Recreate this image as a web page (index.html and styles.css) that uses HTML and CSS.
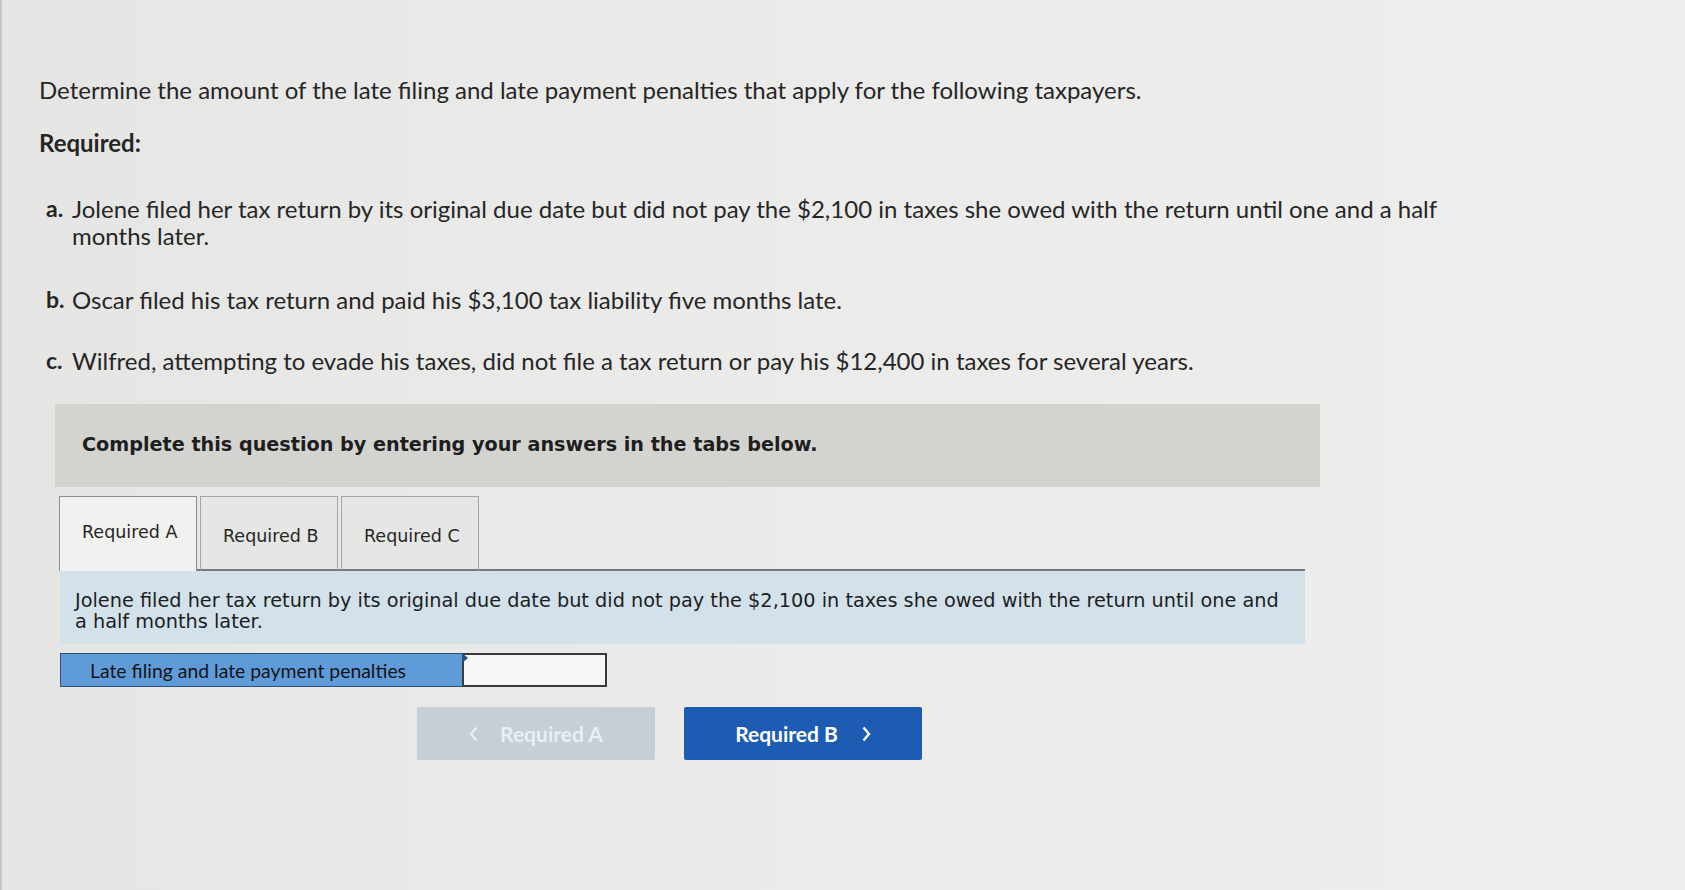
FILE: index.html
```html
<!DOCTYPE html>
<html lang="en">
<head>
<meta charset="utf-8">
<title>Late filing and late payment penalties</title>
<link rel="stylesheet" href="styles.css">
</head>
<body>
<div class="page">
  <p class="title">Determine the amount of the late filing and late payment penalties that apply for the following taxpayers.</p>
  <p class="required">Required:</p>
  <div class="items">
    <div class="item item-a"><span class="marker">a.</span><span class="text">Jolene filed her tax return by its original due date but did not pay the $2,100 in taxes she owed with the return until one and a half months later.</span></div>
    <div class="item item-b"><span class="marker">b.</span><span class="text">Oscar filed his tax return and paid his $3,100 tax liability five months late.</span></div>
    <div class="item item-c"><span class="marker">c.</span><span class="text">Wilfred, attempting to evade his taxes, did not file a tax return or pay his $12,400 in taxes for several years.</span></div>
  </div>

  <div class="instructions">Complete this question by entering your answers in the tabs below.</div>

  <div class="tabs">
    <div class="tab active">Required A</div>
    <div class="tab">Required B</div>
    <div class="tab">Required C</div>
  </div>
  <div class="panel"><p class="panel-text">Jolene filed her tax return by its original due date but did not pay the $2,100 in taxes she owed with the return until one and a half months later.</p></div>

  <div class="answer-row">
    <div class="answer-label">Late filing and late payment penalties</div>
    <div class="answer-input"><span class="notch"></span></div>
  </div>

  <div class="nav">
    <div class="btn btn-prev">
      <svg class="chev" width="9" height="16" viewBox="0 0 9 16"><path d="M7.5 1.5 L2 8 L7.5 14.5" fill="none" stroke="currentColor" stroke-width="2"/></svg>
      <span>Required A</span>
    </div>
    <div class="btn btn-next">
      <span>Required B</span>
      <svg class="chev" width="9" height="16" viewBox="0 0 9 16"><path d="M1.5 1.5 L7 8 L1.5 14.5" fill="none" stroke="currentColor" stroke-width="2.4"/></svg>
    </div>
  </div>
</div>
</body>
</html>
```

FILE: styles.css
```css
* { box-sizing: border-box; }

html, body {
  margin: 0;
  padding: 0;
}

body {
  width: 1685px;
  height: 890px;
  overflow: hidden;
  background: linear-gradient(90deg, #e5e6e4 0%, #eaeae8 35%, #eeeeec 100%);
  font-family: "Lato", "Liberation Sans", sans-serif;
  color: #262626;
  border-left: 2px solid #c6c6c4;
}

.page {
  padding: 76px 0 0 37px;
}

.title {
  margin: 0;
  font-size: 24px;
  line-height: 28px;
}

.required {
  margin: 25px 0 0 0;
  font-size: 24px;
  line-height: 28px;
  font-weight: 700;
}

.items {
  margin-top: 38px;
}

.item {
  display: flex;
  font-size: 24px;
  line-height: 27px;
}

.item-b {
  margin-top: 37px;
}

.item-c {
  margin-top: 34px;
}

.marker {
  width: 33px;
  flex: none;
  padding-left: 7px;
  font-weight: 700;
  font-size: 23px;
}

.item .text {
  max-width: 1400px;
}

.instructions {
  margin: 30px 0 0 16px;
  width: 1265px;
  height: 83px;
  padding: 30px 0 0 27px;
  background: #d3d3d0;
  font-family: "DejaVu Sans", Verdana, sans-serif;
  font-weight: 700;
  font-size: 19.2px;
  line-height: 22px;
  color: #1e1e1e;
}

.tabs {
  display: flex;
  gap: 3px;
  margin: 9px 0 0 20px;
  height: 75px;
}

.tab {
  width: 138px;
  height: 75px;
  display: flex;
  align-items: center;
  padding-left: 22px;
  border: 1px solid #a5a5a3;
  border-bottom: 2px solid #77797b;
  background: #e6e6e4;
  font-family: "DejaVu Sans", Verdana, sans-serif;
  font-size: 17.5px;
  color: #262626;
}

.tab.active {
  background: #f1f1ef;
  border-color: #8e8e8c;
  border-bottom: none;
  padding-bottom: 4px;
}

.tab:not(.active) {
  padding-top: 6px;
}

.panel {
  margin-left: 21px;
  width: 1245px;
  height: 75px;
  padding: 20px 0 0 15px;
  background: #d3e1eb;
  border-top: 2px solid #77797b;
  margin-top: -2px;
}

.panel-text {
  margin: 0;
  width: 1213px;
  font-family: "DejaVu Sans", Verdana, sans-serif;
  font-size: 19.3px;
  line-height: 20.5px;
  color: #1e1e1e;
}

.answer-row {
  display: flex;
  margin: 9px 0 0 21px;
  height: 34px;
}

.answer-label {
  width: 402px;
  height: 34px;
  background: #5f9bd9;
  border: 1px solid #2d4f78;
  border-right: none;
  padding-left: 29px;
  display: flex;
  align-items: center;
  font-size: 19.4px;
  color: #141414;
}

.answer-input {
  position: relative;
  width: 145px;
  height: 34px;
  background: #f7f7f5;
  border: 2px solid #3a3a3a;
}

.notch {
  position: absolute;
  left: -2px;
  top: -2px;
  width: 0;
  height: 0;
  border-top: 5px solid transparent;
  border-bottom: 5px solid transparent;
  border-left: 6px solid #2d4f78;
}

.nav {
  display: flex;
  gap: 29px;
  margin: 20px 0 0 378px;
}

.btn {
  width: 238px;
  height: 53px;
  display: flex;
  align-items: center;
  justify-content: center;
  gap: 24px;
  font-size: 21px;
  font-weight: 700;
  border-radius: 2px;
}

.btn-prev {
  background: #c6ced6;
  color: #eaeff3;
  gap: 22px;
}

.btn-next {
  background: #1c5cb3;
  color: #ffffff;
}

.chev {
  display: block;
}
```
